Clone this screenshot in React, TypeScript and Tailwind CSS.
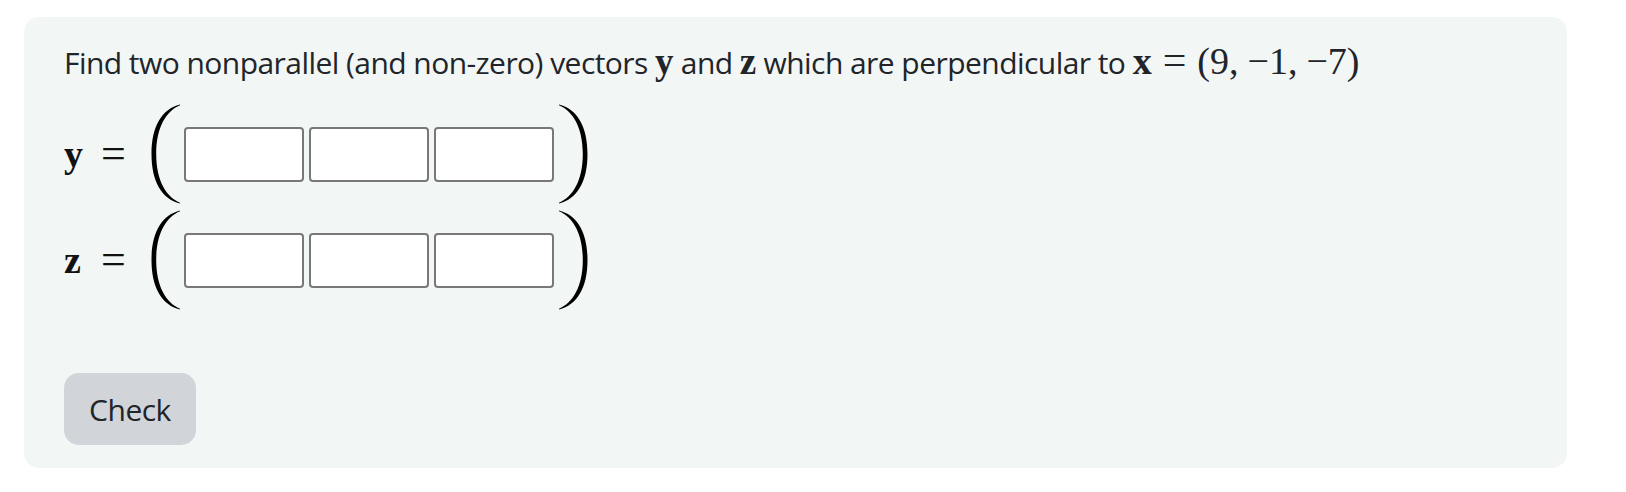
import { useState } from 'react';

// 左右の大きな括弧
function Paren({ side }: { side: 'left' | 'right' }) {
  return (
    <svg width="30" height="100" viewBox="0 0 30 100" className={side === 'right' ? '-scale-x-100' : ''}>
      <path
        d="M29 0.5 C11 5, 0.5 22, 0.5 50 C0.5 78, 11 95, 29 99.5 L29 98.7 C15.5 93, 5.2 77, 5.2 50 C5.2 23, 15.5 7, 29 1.3 Z"
        fill="#000"
      />
    </svg>
  );
}

function VectorRow({ name, values, onChange }: { name: string; values: string[]; onChange: (i: number, v: string) => void }) {
  return (
    <div className="flex items-center h-[100px]">
      <span className="w-[37px] font-bold text-[38px] leading-none text-[#111] font-['Liberation_Serif',serif]">{name}</span>
      <span className="w-[50px] text-[44px] leading-none text-[#111] font-['Liberation_Serif',serif]">=</span>
      <Paren side="left" />
      <div className="flex gap-[5px] ml-[3px] mr-[4px]">
        {values.map((v, i) => (
          <input
            key={i}
            value={v}
            onChange={e => onChange(i, e.target.value)}
            className="w-[120px] h-[55px] bg-white border-2 border-[#787878] rounded-[4px] px-2 text-[28px] outline-none"
          />
        ))}
      </div>
      <Paren side="right" />
    </div>
  );
}

export default function App() {
  const [y, setY] = useState(['', '', '']);
  const [z, setZ] = useState(['', '', '']);

  const upd = (arr: string[], set: (a: string[]) => void) => (i: number, v: string) => {
    const next = [...arr];
    next[i] = v;
    set(next);
  };

  return (
    <div className="pt-[17px] pl-[24px] pr-[59px] bg-white font-['Open_Sans',sans-serif] text-[#212529]">
      <div className="bg-[#f2f6f5] rounded-[15px] pt-[22px] pl-[40px] pb-[23px]">
        <p className="text-[30px] leading-[45px] tracking-[-0.55px]">
          Find two nonparallel (and non-zero) vectors{' '}
          <span className="font-bold font-['Liberation_Serif',serif] text-[37px] leading-none tracking-normal">y</span> and{' '}
          <span className="font-bold font-['Liberation_Serif',serif] text-[37px] leading-none tracking-normal">z</span> which are perpendicular to{' '}
          <span className="font-['Liberation_Serif',serif] text-[38px] leading-none whitespace-nowrap tracking-normal">
            <span className="font-bold">x</span>
            <span className="mx-[11px] text-[42px]">=</span>
            (9,<span className="ml-[9px]">−</span>1,<span className="ml-[9px]">−</span>7)
          </span>
        </p>

        <div className="mt-[19px] flex flex-col gap-[6px]">
          <VectorRow name="y" values={y} onChange={upd(y, setY)} />
          <VectorRow name="z" values={z} onChange={upd(z, setZ)} />
        </div>

        <button className="mt-[63px] w-[132px] h-[72px] bg-[#d1d4d9] rounded-[15px] text-[30px] tracking-[-0.5px] text-[#212529]">
          Check
        </button>
      </div>
    </div>
  );
}
